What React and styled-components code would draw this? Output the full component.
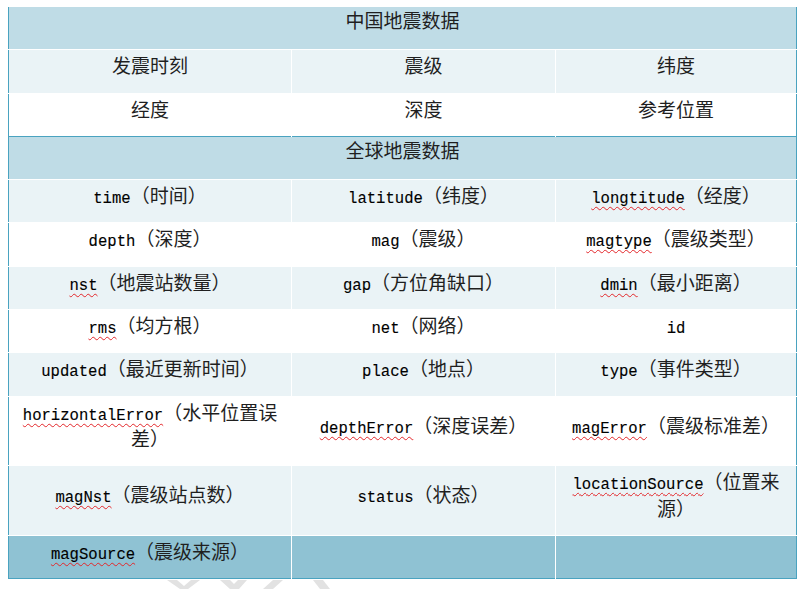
import React from 'react';
import styled, { createGlobalStyle } from 'styled-components';

const GlobalStyle = createGlobalStyle`
  html, body {
    margin: 0;
    padding: 0;
    background: #fff;
    overflow: hidden;
  }
`;

const Page = styled.div`
  position: relative;
  width: 802px;
  height: 589px;
  padding: 6px 0 0 8px;
  box-sizing: border-box;
`;

const Table = styled.table`
  width: 788px;
  border-collapse: collapse;
  table-layout: fixed;
  border: 1px solid #4aa3c0;
  font-family: "Noto Sans CJK SC", "Noto Sans", sans-serif;
  font-size: 19px;
  line-height: 26.3px;
  color: #1f1f1f;
`;

const tones = {
  head: '#bfdce6',
  light: '#eaf3f6',
  white: '#ffffff',
  foot: '#8fc2d3',
};

const Row = styled.tr`
  background: ${(p) => tones[p.$tone]};
  border-top: 1px solid ${(p) => (p.$split ? '#4aa3c0' : '#ffffff')};
`;

const Cell = styled.td`
  padding: ${(p) => (p.$head ? '0 9px 16px' : '2px 9px 14px')};
  text-align: center;
  vertical-align: middle;
  border-left: 1px solid #ffffff;
  &:first-child {
    border-left: none;
  }
`;

const En = styled.span`
  font-family: "Liberation Mono", "DejaVu Sans Mono", monospace;
  font-size: 15.6px;
  line-height: 1;
  color: #000;
  -webkit-text-stroke: 0.12px #000;
  text-decoration: ${(p) => (p.$typo ? 'underline wavy #e3262a' : 'none')};
  text-decoration-thickness: 1px;
  text-decoration-skip-ink: none;
  text-underline-offset: 3px;
`;

const Watermark = styled.svg`
  position: absolute;
  left: 160px;
  top: 580px;
`;

const china = [
  ['发震时刻', '震级', '纬度'],
  ['经度', '深度', '参考位置'],
];

const world = [
  [
    { en: 'time', zh: '时间' },
    { en: 'latitude', zh: '纬度' },
    { en: 'longtitude', zh: '经度', typo: true },
  ],
  [
    { en: 'depth', zh: '深度' },
    { en: 'mag', zh: '震级' },
    { en: 'magtype', zh: '震级类型', typo: true },
  ],
  [
    { en: 'nst', zh: '地震站数量', typo: true },
    { en: 'gap', zh: '方位角缺口' },
    { en: 'dmin', zh: '最小距离', typo: true },
  ],
  [
    { en: 'rms', zh: '均方根', typo: true },
    { en: 'net', zh: '网络' },
    { en: 'id' },
  ],
  [
    { en: 'updated', zh: '最近更新时间' },
    { en: 'place', zh: '地点' },
    { en: 'type', zh: '事件类型' },
  ],
  [
    { en: 'horizontalError', zh: '水平位置误差', typo: true },
    { en: 'depthError', zh: '深度误差', typo: true },
    { en: 'magError', zh: '震级标准差', typo: true },
  ],
  [
    { en: 'magNst', zh: '震级站点数', typo: true },
    { en: 'status', zh: '状态' },
    { en: 'locationSource', zh: '位置来源', typo: true },
  ],
  [{ en: 'magSource', zh: '震级来源', typo: true }, null, null],
];

function Field({ item }) {
  if (!item) return null;
  return (
    <>
      <En $typo={item.typo}>{item.en}</En>
      {item.zh && `（${item.zh}）`}
    </>
  );
}

export default function App() {
  return (
    <Page>
      <GlobalStyle />
      <Table>
        <colgroup>
          <col style={{ width: 283 }} />
          <col style={{ width: 264 }} />
          <col style={{ width: 241 }} />
        </colgroup>
        <tbody>
          <Row $tone="head">
            <Cell $head colSpan={3}>中国地震数据</Cell>
          </Row>
          {china.map((row, i) => (
            <Row key={i} $tone={i % 2 === 0 ? 'light' : 'white'}>
              {row.map((t) => (
                <Cell key={t}>{t}</Cell>
              ))}
            </Row>
          ))}
          <Row $tone="head" $split>
            <Cell $head colSpan={3}>全球地震数据</Cell>
          </Row>
          {world.map((row, i) => (
            <Row
              key={i}
              $tone={i === world.length - 1 ? 'foot' : i % 2 === 0 ? 'light' : 'white'}
            >
              {row.map((item, j) => (
                <Cell key={j}>
                  <Field item={item} />
                </Cell>
              ))}
            </Row>
          ))}
        </tbody>
      </Table>
      <Watermark width="200" height="9" viewBox="0 0 200 9">
        <g fill="#e2e2e2">
          <polygon points="7,0 17,0 24,6 31,0 40,0 28,9 20,9" />
          <polygon points="60,0 70,0 74,4 78,0 87,0 79,9 70,9" />
          <polygon points="113,0 123,0 113,9 103,9" />
          <polygon points="153,0 163,0 170,9 160,9" />
        </g>
      </Watermark>
    </Page>
  );
}
